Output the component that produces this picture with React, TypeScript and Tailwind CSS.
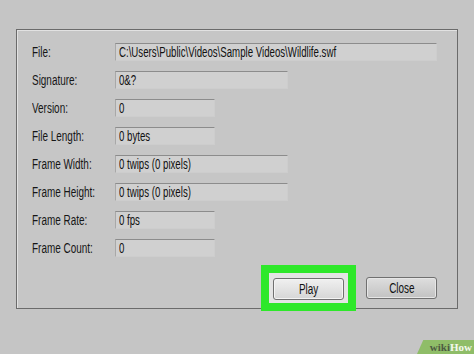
import React from "react";

const rows: { label: string; value: string; w: number }[] = [
  { label: "File:", value: "C:\\Users\\Public\\Videos\\Sample Videos\\Wildlife.swf", w: 322 },
  { label: "Signature:", value: "0&?", w: 173 },
  { label: "Version:", value: "0", w: 100 },
  { label: "File Length:", value: "0 bytes", w: 100 },
  { label: "Frame Width:", value: "0 twips (0 pixels)", w: 173 },
  { label: "Frame Height:", value: "0 twips (0 pixels)", w: 173 },
  { label: "Frame Rate:", value: "0 fps", w: 100 },
  { label: "Frame Count:", value: "0", w: 100 },
];

const font = { fontFamily: '"Liberation Sans", Arial, sans-serif' };

export default function App() {
  return (
    <div className="w-[474px] h-[354px] bg-[#c5c5c5] relative overflow-hidden pt-[29px] pl-[16px]" style={font}>
      <div className="w-[442px] h-[280px] border border-[#6b6b6b] shadow-[inset_1px_1px_0_#e2e2e2] bg-[#c6c6c6] flex flex-col pt-[13px] pl-[15px] pr-[20px]">
        <div className="flex flex-col gap-[10px]">
          {rows.map((r) => (
            <div key={r.label} className="flex items-center h-[18px]">
              <div className="w-[83px] text-[14px] text-[#161616] leading-none whitespace-nowrap">
                <span className="inline-block origin-left scale-x-[0.71]">{r.label}</span>
              </div>
              <div
                className="h-[18px] bg-[#d0d0d0] border-t border-l border-t-[#8c8c8c] border-l-[#a8a8a8] border-b border-r border-b-[#cdcdcd] border-r-[#cdcdcd] flex items-center pl-[3px] text-[14px] text-[#111] leading-none whitespace-nowrap overflow-hidden"
                style={{ width: r.w }}
              >
                <span className="inline-block origin-left scale-x-[0.69]">{r.value}</span>
              </div>
            </div>
          ))}
        </div>
        <div className="flex-1" />
        <div className="flex justify-end gap-[22px] pb-[9px]">
          <div className="relative w-[71px] h-[22px]">
            <div className="absolute left-[-12px] top-[-12px] w-[95px] h-[46px] border-[8px] border-[#2ee82a] bg-[#e4e4e4]" />
            <button className="relative w-[71px] h-[22px] rounded-[3px] border border-[#707070] bg-gradient-to-b from-[#f0f0f0] to-[#d6d6d6] text-[14px] text-[#111] leading-none shadow-[inset_0_0_0_1px_#f4f4f4]">
              <span className="inline-block scale-x-[0.71]">Play</span>
            </button>
          </div>
          <button className="w-[71px] h-[22px] rounded-[3px] border border-[#707070] bg-gradient-to-b from-[#dedede] to-[#c2c2c2] text-[14px] text-[#111] leading-none shadow-[inset_0_0_0_1px_#e6e6e6]">
            <span className="inline-block scale-x-[0.71]">Close</span>
          </button>
        </div>
      </div>
      <div className="absolute right-0 bottom-0 h-[14px] w-[57px] bg-[#8fbd68] [clip-path:polygon(11%_0,100%_0,100%_100%,0_100%)] flex items-center justify-end pr-[2px]">
        <span className="text-[11px] font-bold leading-none whitespace-nowrap" style={{ fontFamily: '"Liberation Serif", "DejaVu Serif", serif' }}>
          <span className="text-[#4d5a42]">wiki</span>
          <span className="text-[#f4f8ee]">How</span>
        </span>
      </div>
    </div>
  );
}
